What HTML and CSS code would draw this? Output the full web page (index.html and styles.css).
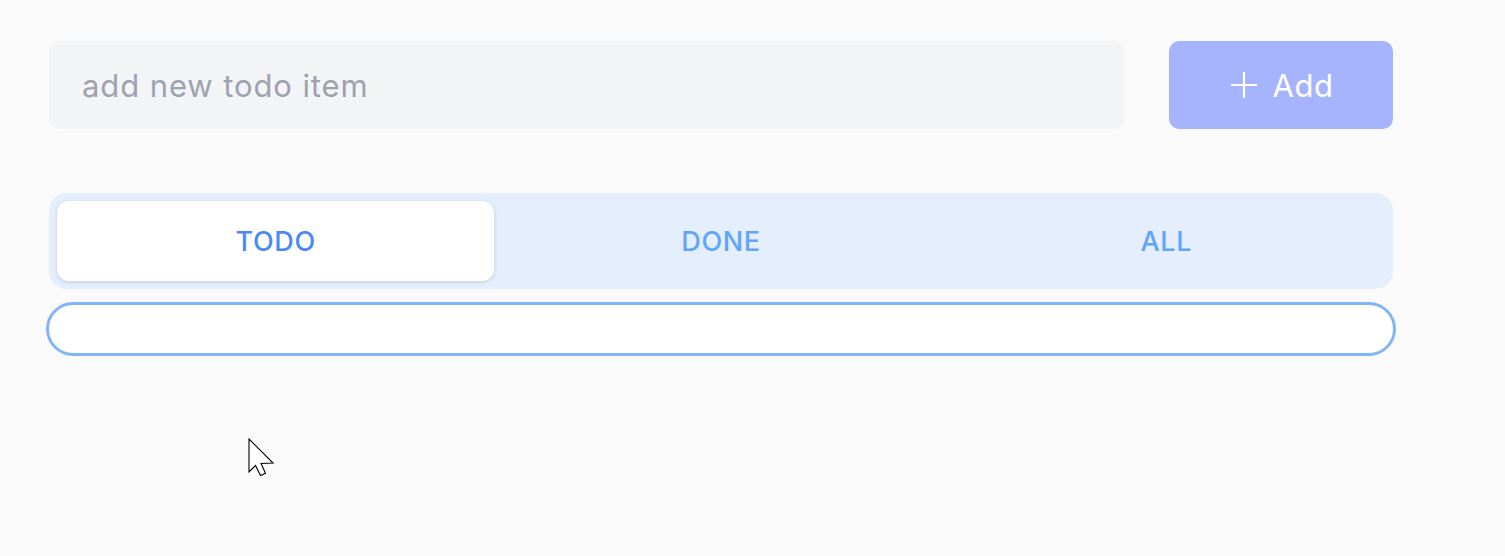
FILE: index.html
```html
<!DOCTYPE html>
<html>
<head>
<meta charset="utf-8">
<link rel="stylesheet" href="styles.css">
</head>
<body>
<main class="app">
  <form class="add-row">
    <input class="new-item" type="text" placeholder="add new todo item">
    <button class="add-btn" type="button">
      <svg class="plus" viewBox="0 0 30 30" width="30" height="30"><path d="M15 2v26M2 15h26" stroke="#fff" stroke-width="2.2" fill="none"/></svg>
      <span>Add</span>
    </button>
  </form>
  <nav class="tabs">
    <button class="tab active">TODO</button>
    <button class="tab">DONE</button>
    <button class="tab">ALL</button>
  </nav>
  <div class="list"></div>
</main>
<svg class="cursor" width="28" height="40" viewBox="0 0 28 40"><path d="M1 1 L1 34 L7.5 27.5 L12.5 37.5 L17.5 35.3 L13 25.5 L25 25 Z" fill="#fff" stroke="#000" stroke-width="1.1" stroke-linejoin="miter"/></svg>
</body>
</html>
```
FILE: styles.css
```css
html, body {
  margin: 0;
  padding: 0;
  background: #fafafa;
  font-family: Inter, "Noto Sans", sans-serif;
}
.app {
  width: 1344px;
  padding: 41px 0 0 49px;
  display: flex;
  flex-direction: column;
}
.add-row {
  display: flex;
  gap: 45px;
  margin: 0;
}
.new-item {
  flex: 1;
  height: 88px;
  box-sizing: border-box;
  border: none;
  border-radius: 10px;
  background: #f3f4f6;
  padding: 0 33px;
  font-family: inherit;
  font-size: 31px;
  letter-spacing: 0.9px;
  color: #374151;
  outline: none;
}
.new-item::placeholder {
  color: #9ca3af;
}
.add-btn {
  width: 224px;
  height: 88px;
  border: none;
  border-radius: 10px;
  background: #a5b4fc;
  color: #fff;
  font-family: inherit;
  font-size: 31px;
  letter-spacing: 0.5px;
  display: flex;
  align-items: center;
  justify-content: center;
  gap: 14px;
  padding: 0;
}
.plus {
  display: block;
}
.tabs {
  margin-top: 64px;
  background: #e4eefc;
  border-radius: 18px;
  padding: 8px;
  display: grid;
  grid-template-columns: repeat(3, 1fr);
  gap: 8px;
  height: 96px;
  box-sizing: border-box;
}
.tab {
  border: none;
  background: transparent;
  border-radius: 12px;
  font-family: inherit;
  font-size: 27px;
  font-weight: 500;
  letter-spacing: 0.6px;
  color: #60a5fa;
  padding: 0;
}
.tab.active {
  background: #fff;
  color: #4a8af4;
  box-shadow: 0 1px 4px rgba(0, 0, 0, 0.15);
}
.list {
  margin: 13px -3px 0;
  height: 54px;
  box-sizing: border-box;
  background: #fff;
  border-radius: 999px;
  border: 3px solid #80b6f8;
}
.cursor {
  position: absolute;
  left: 247.5px;
  top: 437.5px;
}
```
